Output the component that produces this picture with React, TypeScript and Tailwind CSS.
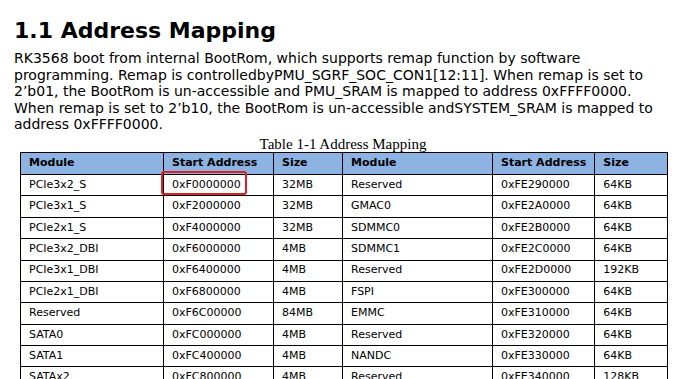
import React from 'react';

const rows: string[][] = [
  ['PCIe3x2_S', '0xF0000000', '32MB', 'Reserved', '0xFE290000', '64KB'],
  ['PCIe3x1_S', '0xF2000000', '32MB', 'GMAC0', '0xFE2A0000', '64KB'],
  ['PCIe2x1_S', '0xF4000000', '32MB', 'SDMMC0', '0xFE2B0000', '64KB'],
  ['PCIe3x2_DBI', '0xF6000000', '4MB', 'SDMMC1', '0xFE2C0000', '64KB'],
  ['PCIe3x1_DBI', '0xF6400000', '4MB', 'Reserved', '0xFE2D0000', '192KB'],
  ['PCIe2x1_DBI', '0xF6800000', '4MB', 'FSPI', '0xFE300000', '64KB'],
  ['Reserved', '0xF6C00000', '84MB', 'EMMC', '0xFE310000', '64KB'],
  ['SATA0', '0xFC000000', '4MB', 'Reserved', '0xFE320000', '64KB'],
  ['SATA1', '0xFC400000', '4MB', 'NANDC', '0xFE330000', '64KB'],
  ['SATAx2', '0xFC800000', '4MB', 'Reserved', '0xFE340000', '128KB'],
];

const headers = ['Module', 'Start Address', 'Size', 'Module', 'Start Address', 'Size'];
const widths = ['w-[143px]', 'w-[110px]', 'w-[69px]', 'w-[150px]', 'w-[101px]', 'w-[73px]'];

const App: React.FC = () => {
  return (
    <div className="w-[692px] h-[379px] overflow-hidden bg-white text-black font-['DejaVu_Sans','Verdana',sans-serif]">
      <div className="pl-[14px] pt-[17px]">
        <h1 className="text-[22px] leading-[28px] font-bold">1.1 Address Mapping</h1>
        <p className="mt-[5px] text-[14px] leading-[16.6px] whitespace-nowrap">
          RK3568 boot from internal BootRom, which supports remap function by software
          <br />
          programming. Remap is controlledbyPMU_SGRF_SOC_CON1[12:11]. When remap is set to
          <br />
          2’b01, the BootRom is un-accessible and PMU_SRAM is mapped to address 0xFFFF0000.
          <br />
          When remap is set to 2’b10, the BootRom is un-accessible andSYSTEM_SRAM is mapped to
          <br />
          address 0xFFFF0000.
        </p>
      </div>

      <div className="pl-[20px]">
        <div className="w-[646px] text-center font-['Liberation_Serif',serif] text-[15px] leading-[15px] mt-[4px]">
          Table 1-1 Address Mapping
        </div>
        <div className="relative">
          <table className="table-fixed border-collapse text-[11px]">
            <thead>
              <tr className="bg-[#8db3e2] h-[22px]">
                {headers.map((h, i) => (
                  <th
                    key={i}
                    className={`${widths[i]} border border-black text-left font-bold px-[8px] py-0 whitespace-nowrap`}
                  >
                    {h}
                  </th>
                ))}
              </tr>
            </thead>
            <tbody>
              {rows.map((r, ri) => (
                <tr key={ri} className="h-[21.4px]">
                  {r.map((c, ci) => (
                    <td key={ci} className="border border-black px-[8px] py-0 whitespace-nowrap">
                      {c}
                    </td>
                  ))}
                </tr>
              ))}
            </tbody>
          </table>
          {/* highlight box */}
          <div className="absolute left-[141px] top-[19px] w-[86px] h-[24px] border-2 border-[#e02020] rounded-[3px]" />
        </div>
      </div>
    </div>
  );
};

export default App;
